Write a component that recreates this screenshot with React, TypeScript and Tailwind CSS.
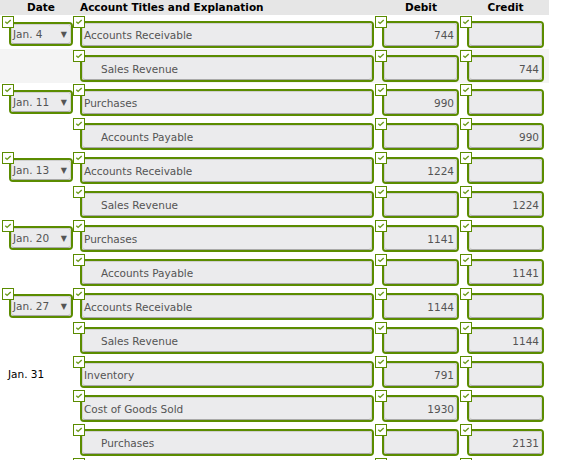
import React from "react";

type Row = {
  date?: string;
  plainDate?: string;
  account: string;
  indent?: boolean;
  debit?: string;
  credit?: string;
};

const rows: Row[] = [
  { date: "Jan. 4", account: "Accounts Receivable", debit: "744" },
  { account: "Sales Revenue", indent: true, credit: "744" },
  { date: "Jan. 11", account: "Purchases", debit: "990" },
  { account: "Accounts Payable", indent: true, credit: "990" },
  { date: "Jan. 13", account: "Accounts Receivable", debit: "1224" },
  { account: "Sales Revenue", indent: true, credit: "1224" },
  { date: "Jan. 20", account: "Purchases", debit: "1141" },
  { account: "Accounts Payable", indent: true, credit: "1141" },
  { date: "Jan. 27", account: "Accounts Receivable", debit: "1144" },
  { account: "Sales Revenue", indent: true, credit: "1144" },
  { plainDate: "Jan. 31", account: "Inventory", debit: "791" },
  { account: "Cost of Goods Sold", debit: "1930" },
  { account: "Purchases", indent: true, credit: "2131" },
  { account: "" },
];

function Check({ className }: { className: string }) {
  return (
    <svg
      width="12"
      height="12"
      viewBox="0 0 12 12"
      className={`absolute ${className}`}
    >
      <rect x="0.5" y="0.5" width="11" height="11" fill="white" stroke="#5b8c00" />
      <path d="M3.3 5.8 L5.1 7.4 L8.7 3.9" fill="none" stroke="#6a9a1a" strokeWidth="1.4" />
    </svg>
  );
}

function Field({
  width,
  value,
  align = "left",
  indent,
}: {
  width: string;
  value: string;
  align?: "left" | "right";
  indent?: boolean;
}) {
  return (
    <div
      className={`${width} ml-[7px] mt-[6px] h-[27px] rounded-[4px] border-2 border-[#5b8c00] bg-white`}
    >
      <div
        className={`h-full rounded-[3px] border border-[#d0d0d0] border-b-[#a9a9a9] bg-[#ebebed] flex items-center pt-[2px] ${
          align === "right" ? "justify-end pr-[2px]" : indent ? "pl-[18px]" : "pl-[1px]"
        } text-[#545454]`}
      >
        {value}
      </div>
    </div>
  );
}

export default function App() {
  return (
    <div
      className="w-[577px] h-[460px] overflow-hidden bg-white text-[10.5px]"
      style={{ fontFamily: '"DejaVu Sans", Verdana, sans-serif' }}
    >
      <div className="w-[549px] h-[15px] bg-[#e6e6e6] flex items-center font-bold text-black leading-[15px]">
        <div className="w-[73px] pl-[9px] text-center">Date</div>
        <div className="w-[302px] pl-[7px]">Account Titles and Explanation</div>
        <div className="w-[85px] pl-[7px] text-center">Debit</div>
        <div className="w-[84px] pl-[7px] text-center">Credit</div>
      </div>
      {rows.map((r, i) => (
        <div
          key={i}
          className={`w-[549px] h-[34px] flex items-start ${i === 1 ? "bg-[#f4f4f4]" : ""}`}
        >
          <div className="w-[73px] h-full relative">
            {r.date && (
              <>
                <div className="ml-[9px] mt-[7px] w-[64px] h-[24px] rounded-[4px] border-2 border-[#5b8c00] bg-white">
                  <div className="h-full rounded-[3px] border border-[#d0d0d0] border-b-[#a9a9a9] bg-[#ebebed] flex items-center justify-between pt-[2px] pl-[1px] pr-[3px] text-[#545454]">
                    <span>{r.date}</span>
                    <span className="text-[8px] text-[#555]">▼</span>
                  </div>
                </div>
                <Check className="left-[2px] top-[1px]" />
              </>
            )}
            {r.plainDate && (
              <div className="pl-[8px] pt-[12px] text-black">{r.plainDate}</div>
            )}
          </div>
          <div className="w-[302px] h-full relative">
            <Field width="w-[294px]" value={r.account} indent={r.indent} />
            <Check className="left-0 top-[1px]" />
          </div>
          <div className="w-[85px] h-full relative">
            <Field width="w-[77px]" value={r.debit ?? ""} align="right" />
            <Check className="left-0 top-[1px]" />
          </div>
          <div className="w-[84px] h-full relative">
            <Field width="w-[77px]" value={r.credit ?? ""} align="right" />
            <Check className="left-0 top-[1px]" />
          </div>
        </div>
      ))}
    </div>
  );
}
